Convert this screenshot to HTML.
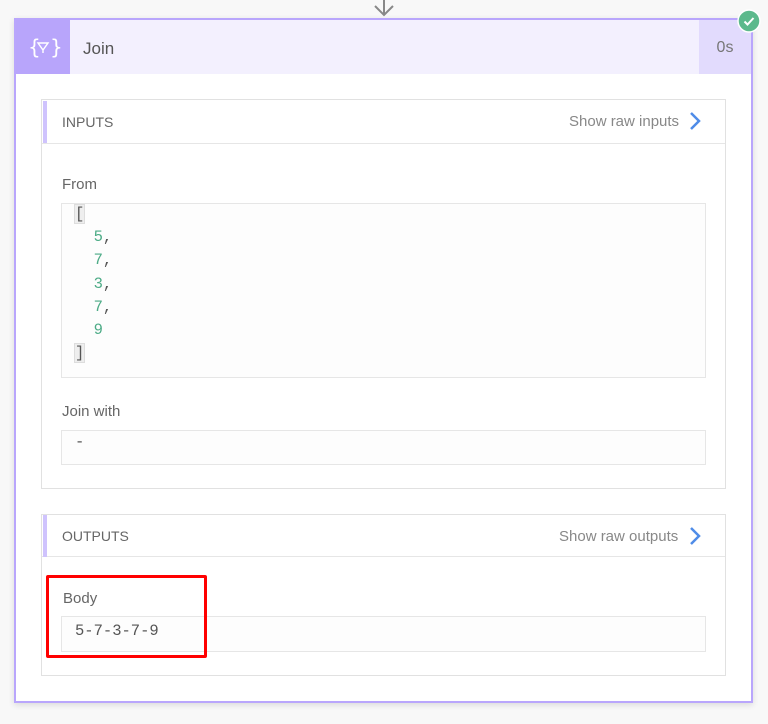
<!DOCTYPE html>
<html><head><style>
*{margin:0;padding:0;box-sizing:border-box}
body{width:768px;height:724px;background:#f8f8f8;font-family:"Liberation Sans",sans-serif;position:relative;overflow:hidden;color:#605e5c}
.abs{position:absolute}
.card{left:14px;top:18px;width:739px;height:685px;border:2px solid #b9a6fc;background:#fff;box-shadow:0 2px 6px rgba(0,0,0,.12)}
.hdr{left:16px;top:20px;width:735px;height:54px;background:#f3f0fe}
.icon{left:16px;top:20px;width:54px;height:54px;background:#b8a5fb}
.dur{left:699px;top:20px;width:52px;height:54px;background:#e2dbfd;font-size:16px;color:#777;line-height:56px;text-align:center}
.box{border:1px solid #e1e1e1;background:#fff}
.sh{border-bottom:1px solid #e6e6e6}
.bar{background:#cfc3fd;width:4px}
.lbl{font-size:15px;color:#666}
.field{border:1px solid #e6e6e6;background:#fdfdfd}
.mono{font-family:"Liberation Mono","DejaVu Sans Mono",monospace;font-size:15.5px}
.g{color:#4cab86}
</style></head><body>
<svg class="abs" style="left:370px;top:0" width="28" height="18"><path d="M14 0V15M5 6L14 15L23 6" stroke="#888" stroke-width="2" fill="none"/></svg>
<div class="abs card"></div>
<div class="abs hdr"></div>
<div class="abs icon"><svg width="54" height="54"><text x="12" y="34" font-size="20" fill="#fff" font-family="DejaVu Sans">{</text><text x="34" y="34" font-size="20" fill="#fff" font-family="DejaVu Sans">}</text><path d="M22 23H32L27 30Z M27 30V33" stroke="#fff" stroke-width="1.4" fill="none"/></svg></div>
<div class="abs" style="left:83px;top:39px;font-size:17px;color:#555">Join</div>
<div class="abs dur">0s</div>
<svg class="abs" style="left:737px;top:9px" width="24" height="24"><circle cx="12" cy="12" r="11" fill="#5cb98c" stroke="#fff" stroke-width="1.5"/><path d="M7.5 12.5L10.5 15.5L16.5 9" stroke="#fff" stroke-width="2" fill="none"/></svg>

<div class="abs box" style="left:41px;top:99px;width:685px;height:390px"></div>
<div class="abs sh" style="left:42px;top:100px;width:683px;height:44px"></div>
<div class="abs bar" style="left:43px;top:101px;height:42px"></div>
<div class="abs" style="left:62px;top:114px;font-size:14px;color:#666">INPUTS</div>
<div class="abs" style="left:569px;top:113px;font-size:15px;color:#888">Show raw inputs</div>
<svg class="abs" style="left:688px;top:110px" width="14" height="22"><path d="M3 3L11 11L3 19" stroke="#4f8ce8" stroke-width="2.5" fill="none"/></svg>
<div class="abs lbl" style="left:62px;top:176px">From</div>
<div class="abs field" style="left:61px;top:203px;width:645px;height:175px"></div>
<div class="abs mono" style="left:75px;top:203px;line-height:23.2px;color:#555;white-space:pre"><span style="background:#eee;outline:1px solid #ddd">[</span>
  <span class="g">5</span>,
  <span class="g">7</span>,
  <span class="g">3</span>,
  <span class="g">7</span>,
  <span class="g">9</span>
<span style="background:#eee;outline:1px solid #ddd">]</span></div>
<div class="abs lbl" style="left:62px;top:403px">Join with</div>
<div class="abs field" style="left:61px;top:430px;width:645px;height:35px"></div>
<div class="abs mono" style="left:75px;top:433px;color:#555">-</div>

<div class="abs box" style="left:41px;top:514px;width:685px;height:162px"></div>
<div class="abs sh" style="left:42px;top:515px;width:683px;height:42px"></div>
<div class="abs bar" style="left:43px;top:515px;height:42px"></div>
<div class="abs" style="left:62px;top:528px;font-size:14px;color:#666">OUTPUTS</div>
<div class="abs" style="left:559px;top:528px;font-size:15px;color:#888">Show raw outputs</div>
<svg class="abs" style="left:688px;top:525px" width="14" height="22"><path d="M3 3L11 11L3 19" stroke="#4f8ce8" stroke-width="2.5" fill="none"/></svg>
<div class="abs lbl" style="left:63px;top:590px">Body</div>
<div class="abs field" style="left:61px;top:616px;width:645px;height:36px"></div>
<div class="abs mono" style="left:75px;top:622px;color:#555">5-7-3-7-9</div>
<div class="abs" style="left:46px;top:575px;width:161px;height:83px;border:3px solid #f00;border-radius:2px"></div>
</body></html>
